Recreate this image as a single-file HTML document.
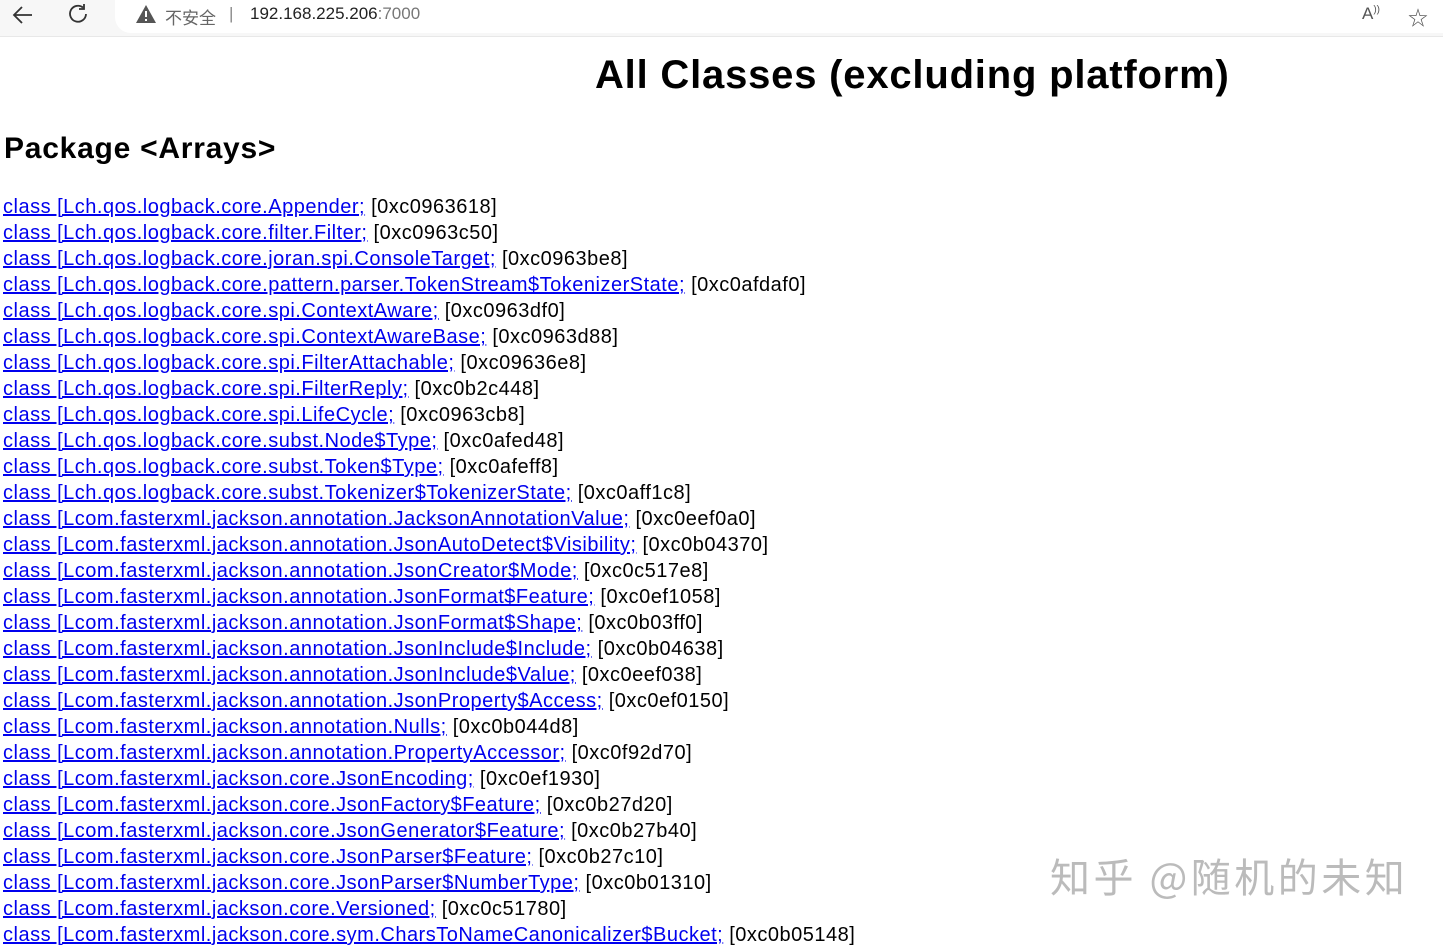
<!DOCTYPE html>
<html><head><meta charset="utf-8"><style>
*{margin:0;padding:0;box-sizing:border-box}
body{width:1443px;height:935px;overflow:hidden;background:#fff;font-family:"Liberation Sans","Noto Sans CJK SC",sans-serif;position:relative}
.bar{position:absolute;left:0;top:0;width:1443px;height:37px;background:#f7f7f7;border-bottom:1px solid #e8e8e8}
.url{position:absolute;left:115px;top:0;width:1330px;height:33px;background:#fff;border-radius:0 0 0 16px}
.t{position:absolute;color:#222;font-size:17px;top:4px}
h1{position:absolute;left:595px;top:53px;font-size:40px;font-weight:bold;white-space:nowrap;letter-spacing:0.8px}
h2{position:absolute;left:4px;top:132px;font-size:30px;font-weight:bold;white-space:nowrap;letter-spacing:0.75px}
.list{position:absolute;left:3px;top:194px;font-size:20px;line-height:26px;white-space:nowrap;color:#000;letter-spacing:0.5px}
.list a{color:#0000ee;text-decoration:underline}
.wm{position:absolute;left:1050px;top:846px;font-size:40px;color:#bbb;font-family:"Noto Sans CJK SC",sans-serif;letter-spacing:3.5px}
</style></head><body>
<div class="bar"><div class="url"></div>
<svg style="position:absolute;left:10px;top:3px" width="26" height="24" viewBox="0 0 26 24"><path d="M22 12H4M12 4L4 12L12 20" stroke="#333" stroke-width="1.8" fill="none"/></svg>
<svg style="position:absolute;left:66px;top:2px" width="24" height="24" viewBox="0 0 24 24"><path d="M20 12A8 8 0 1 1 17 5.5M18 2v5h-5" stroke="#333" stroke-width="1.8" fill="none"/></svg>
<svg style="position:absolute;left:135px;top:4px" width="22" height="20" viewBox="0 0 22 20"><path d="M11 1L21 19H1Z" fill="#555"/><path d="M11 7v6M11 15v2" stroke="#fff" stroke-width="2"/></svg>
<div class="t" style="left:165px;color:#666">不安全</div>
<div class="t" style="left:229px;color:#888">|</div>
<div class="t" style="left:250px">192.168.225.206<span style="color:#777">:7000</span></div>
<div class="t" style="left:1362px;color:#555">A<sup style="font-size:10px">))</sup></div>
<div class="t" style="left:1408px;color:#555;font-size:20px;top:2px">☆</div>
</div>
<h1>All Classes (excluding platform)</h1>
<h2>Package &lt;Arrays&gt;</h2>
<div class="list">
<a>class [Lch.qos.logback.core.Appender;</a> [0xc0963618]<br>
<a>class [Lch.qos.logback.core.filter.Filter;</a> [0xc0963c50]<br>
<a>class [Lch.qos.logback.core.joran.spi.ConsoleTarget;</a> [0xc0963be8]<br>
<a>class [Lch.qos.logback.core.pattern.parser.TokenStream$TokenizerState;</a> [0xc0afdaf0]<br>
<a>class [Lch.qos.logback.core.spi.ContextAware;</a> [0xc0963df0]<br>
<a>class [Lch.qos.logback.core.spi.ContextAwareBase;</a> [0xc0963d88]<br>
<a>class [Lch.qos.logback.core.spi.FilterAttachable;</a> [0xc09636e8]<br>
<a>class [Lch.qos.logback.core.spi.FilterReply;</a> [0xc0b2c448]<br>
<a>class [Lch.qos.logback.core.spi.LifeCycle;</a> [0xc0963cb8]<br>
<a>class [Lch.qos.logback.core.subst.Node$Type;</a> [0xc0afed48]<br>
<a>class [Lch.qos.logback.core.subst.Token$Type;</a> [0xc0afeff8]<br>
<a>class [Lch.qos.logback.core.subst.Tokenizer$TokenizerState;</a> [0xc0aff1c8]<br>
<a>class [Lcom.fasterxml.jackson.annotation.JacksonAnnotationValue;</a> [0xc0eef0a0]<br>
<a>class [Lcom.fasterxml.jackson.annotation.JsonAutoDetect$Visibility;</a> [0xc0b04370]<br>
<a>class [Lcom.fasterxml.jackson.annotation.JsonCreator$Mode;</a> [0xc0c517e8]<br>
<a>class [Lcom.fasterxml.jackson.annotation.JsonFormat$Feature;</a> [0xc0ef1058]<br>
<a>class [Lcom.fasterxml.jackson.annotation.JsonFormat$Shape;</a> [0xc0b03ff0]<br>
<a>class [Lcom.fasterxml.jackson.annotation.JsonInclude$Include;</a> [0xc0b04638]<br>
<a>class [Lcom.fasterxml.jackson.annotation.JsonInclude$Value;</a> [0xc0eef038]<br>
<a>class [Lcom.fasterxml.jackson.annotation.JsonProperty$Access;</a> [0xc0ef0150]<br>
<a>class [Lcom.fasterxml.jackson.annotation.Nulls;</a> [0xc0b044d8]<br>
<a>class [Lcom.fasterxml.jackson.annotation.PropertyAccessor;</a> [0xc0f92d70]<br>
<a>class [Lcom.fasterxml.jackson.core.JsonEncoding;</a> [0xc0ef1930]<br>
<a>class [Lcom.fasterxml.jackson.core.JsonFactory$Feature;</a> [0xc0b27d20]<br>
<a>class [Lcom.fasterxml.jackson.core.JsonGenerator$Feature;</a> [0xc0b27b40]<br>
<a>class [Lcom.fasterxml.jackson.core.JsonParser$Feature;</a> [0xc0b27c10]<br>
<a>class [Lcom.fasterxml.jackson.core.JsonParser$NumberType;</a> [0xc0b01310]<br>
<a>class [Lcom.fasterxml.jackson.core.Versioned;</a> [0xc0c51780]<br>
<a>class [Lcom.fasterxml.jackson.core.sym.CharsToNameCanonicalizer$Bucket;</a> [0xc0b05148]<br>
</div>
<div class="wm">知乎 @随机的未知</div>
</body></html>
